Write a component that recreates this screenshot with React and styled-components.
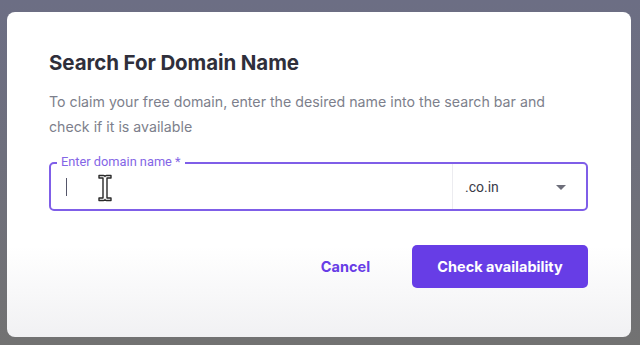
import React from 'react';
import styled, {createGlobalStyle} from 'styled-components';

const GlobalStyle = createGlobalStyle`
    html, body {
        margin: 0;
        padding: 0;
    }
    body {
        font-family: "Inter", "Liberation Sans", sans-serif;
    }
`

const Overlay = styled.div`
    width: 640px;
    height: 345px;
    box-sizing: border-box;
    padding: 12px 9px 8px 7px;
    background: linear-gradient(180deg, #6c6e84 0%, #6e6f7c 45%, #727272 100%);
    overflow: hidden;
`

const Modal = styled.div`
    height: 100%;
    box-sizing: border-box;
    padding: 39px 43px 0 42px;
    border-radius: 8px;
    background: linear-gradient(180deg, #ffffff 0%, #ffffff 72%, #f1f1f3 100%);
    display: flex;
    flex-direction: column;
`

const Title = styled.h2`
    margin: 0;
    font-size: 20.5px;
    line-height: 24px;
    font-weight: 700;
    color: #2f2f3b;
    letter-spacing: -0.1px;
`

const Description = styled.p`
    margin: 14px 0 0;
    max-width: 520px;
    font-size: 14.2px;
    line-height: 25px;
    color: #7d7f8c;
`

const Field = styled.div`
    position: relative;
    margin-top: 23px;
    height: 49px;
    box-sizing: border-box;
    border: 2px solid #7f5ee8;
    border-radius: 5px;
    display: flex;
`

const Label = styled.span`
    position: absolute;
    top: -10px;
    left: 6px;
    padding: 0 4px;
    background: #fff;
    font-family: "Roboto", "Liberation Sans", sans-serif;
    font-size: 12.8px;
    line-height: 16px;
    color: #8466e6;
`

const NameInput = styled.div`
    flex: 1;
    position: relative;
    display: flex;
    align-items: center;
    padding-left: 15px;
`

const Caret = styled.span`
    width: 1px;
    height: 18px;
    background: #55566a;
`

const Pointer = styled.svg`
    position: absolute;
    left: 46px;
    top: 10px;
`

const Select = styled.div`
    width: 134px;
    border-left: 1px solid #ececf0;
    display: flex;
    align-items: center;
    justify-content: space-between;
    padding: 0 20px 0 12px;
    box-sizing: border-box;
    font-family: "Roboto", "Liberation Sans", sans-serif;
    font-size: 14px;
    color: #3a3b48;
`

const Arrow = styled.span`
    width: 0;
    height: 0;
    border-left: 5px solid transparent;
    border-right: 5px solid transparent;
    border-top: 5px solid #6d6e7a;
    margin-top: 2px;
`

const Actions = styled.div`
    margin-top: 34px;
    display: flex;
    justify-content: flex-end;
    align-items: center;
`

const TextButton = styled.button`
    border: none;
    background: none;
    font-family: inherit;
    font-size: 14.5px;
    font-weight: 700;
    color: ${props => props.color || '#673de6'};
    width: 93px;
    height: 43px;
    margin-right: 20px;
    cursor: pointer;
`

const PrimaryButton = styled.button`
    border: none;
    border-radius: 5px;
    background: #673de6;
    color: #fff;
    font-family: inherit;
    font-size: 14.5px;
    font-weight: 700;
    width: 176px;
    height: 43px;
    cursor: pointer;
`

const App = () => {
    return (
        <>
            <GlobalStyle />
            <Overlay>
                <Modal>
                    <Title>Search For Domain Name</Title>
                    <Description>
                        To claim your free domain, enter the desired name into the search bar and check if it is available
                    </Description>
                    <Field>
                        <Label>Enter domain name *</Label>
                        <NameInput>
                            <Caret />
                            <Pointer width="16" height="28" viewBox="0 0 16 28">
                                <path d="M2 1.5h4.5c.8 0 1.5.5 1.5 1 0-.5.7-1 1.5-1H14v2.5h-4v20h4v2.5H9.5c-.8 0-1.5-.5-1.5-1 0 .5-.7 1-1.5 1H2V24h4V4H2z"
                                      fill="#fff" stroke="#2a2a2a" strokeWidth="1.4" strokeLinejoin="round"/>
                            </Pointer>
                        </NameInput>
                        <Select>
                            .co.in
                            <Arrow />
                        </Select>
                    </Field>
                    <Actions>
                        <TextButton>Cancel</TextButton>
                        <PrimaryButton>Check availability</PrimaryButton>
                    </Actions>
                </Modal>
            </Overlay>
        </>
    )
}

export default App;
